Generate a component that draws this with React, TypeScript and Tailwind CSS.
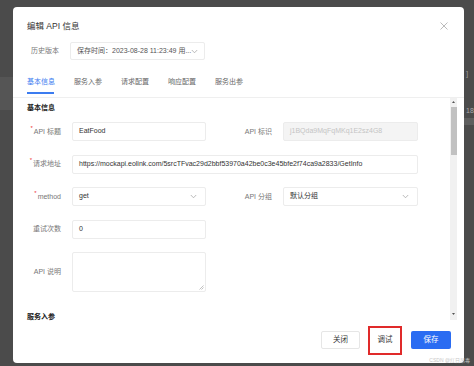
import React from "react";

const font = { fontFamily: '"Liberation Sans", "Noto Sans CJK SC", sans-serif' };

function Chevron() {
  return (
    <svg width="7" height="5" viewBox="0 0 7 5" className="shrink-0">
      <path d="M0.8 1 L3.5 3.8 L6.2 1" fill="none" stroke="#aaa" strokeWidth="0.8" />
    </svg>
  );
}

function Label({ text, required, width }: { text: string; required?: boolean; width: string }) {
  return (
    <div className={`${width} shrink-0 text-right text-[7px] leading-[10px] text-[#777] whitespace-nowrap`}>
      {required && <span className="relative -top-[4px] mr-[1px] text-[6px] text-[#e33]">*</span>}
      {text}
    </div>
  );
}

function Input({ value, width, disabled }: { value: string; width: string; disabled?: boolean }) {
  return (
    <div
      className={`${width} h-[19px] shrink-0 flex items-center px-[6px] border border-[#ececec] rounded-[2px] text-[7px] whitespace-nowrap overflow-hidden ${
        disabled ? "bg-[#f4f4f4] text-[#c4c4c4]" : "bg-white text-[#333]"
      }`}
    >
      {value}
    </div>
  );
}

function Select({ value, width }: { value: string; width: string }) {
  return (
    <div className={`${width} h-[19px] shrink-0 flex items-center justify-between pl-[6px] pr-[8px] border border-[#ececec] rounded-[2px] bg-white text-[7px] text-[#333]`}>
      <span>{value}</span>
      <Chevron />
    </div>
  );
}

export default function App() {
  const tabs = ["基本信息", "服务入参", "请求配置", "响应配置", "服务出参"];
  return (
    <div className="relative w-[474px] h-[366px] overflow-hidden bg-[#4b4b4b]" style={font}>
      {/* backdrop page hints */}
      <div className="absolute left-0 top-[77px] w-[14px] h-[33px] bg-[#555]" />
      <div className="absolute left-[466px] top-[68px] text-[8px] text-[#9a9a9a]">]</div>
      <div className="absolute left-[466px] top-[106px] text-[7px] text-[#aaa]">18</div>
      <div className="absolute left-[464px] top-[118px] w-[10px] h-[7px] bg-[#5e5e5e]" />

      {/* modal */}
      <div className="absolute left-[13px] top-[7px] w-[451px] h-[356px] bg-white rounded-[4px] flex flex-col">
        <div className="h-[33px] shrink-0 flex items-start justify-between pl-[14px] pr-[14px] pt-[14px]">
          <div className="text-[8.5px] leading-[10px] text-[#333]">编辑 API 信息</div>
          <svg width="8" height="8" viewBox="0 0 8 8" className="mt-[1px] mr-[2px]">
            <path d="M0.5 0.5 L7.5 7.5 M7.5 0.5 L0.5 7.5" stroke="#aaa" strokeWidth="0.8" />
          </svg>
        </div>

        <div className="mt-[2px] flex items-center pl-[18px] gap-[11px]">
          <div className="text-[7px] text-[#777] w-[28px] whitespace-nowrap">历史版本</div>
          <div className="w-[135px] h-[18px] flex items-center justify-between pl-[6px] pr-[7px] border border-[#ececec] rounded-[2px] text-[7px] text-[#555] whitespace-nowrap">
            <span>保存时间：2023-08-28 11:23:49 用...</span>
            <Chevron />
          </div>
        </div>

        <div className="mt-[14px] h-[24px] shrink-0 flex gap-[20px] pl-[14px] border-b border-[#efefef]">
          {tabs.map((t, i) => (
            <div key={t} className="relative w-[27px] pt-[3px]">
              <div className={`text-[7px] leading-[10px] whitespace-nowrap ${i === 0 ? "text-[#3c7cf0]" : "text-[#666]"}`}>{t}</div>
              {i === 0 && <div className="absolute left-0 right-0 top-[18px] h-[1.5px] bg-[#3c7cf0]" />}
            </div>
          ))}
        </div>

        <div className="relative flex-1 overflow-hidden mr-[7px]">
          <div className="pl-[14px] pt-[5px]">
            <div className="text-[7px] leading-[10px] font-bold text-[#222]">基本信息</div>
            <div className="mt-[9px] flex flex-col gap-[13.5px]">
              <div className="flex items-center">
                <Label text="API 标题" required width="w-[34px]" />
                <div className="w-[11px]" />
                <Input value="EatFood" width="w-[134px]" />
                <Label text="API 标识" width="w-[66px]" />
                <div className="w-[11px]" />
                <Input value="j1BQda9MqFqMKq1E2sz4G8" width="w-[135px]" disabled />
              </div>
              <div className="flex items-center">
                <Label text="请求地址" required width="w-[34px]" />
                <div className="w-[11px]" />
                <Input value="https://mockapi.eolink.com/5srcTFvac29d2bbf53970a42be0c3e45bfe2f74ca9a2833/GetInfo" width="w-[346px]" />
              </div>
              <div className="flex items-center">
                <Label text="method" required width="w-[34px]" />
                <div className="w-[11px]" />
                <Select value="get" width="w-[134px]" />
                <Label text="API 分组" width="w-[66px]" />
                <div className="w-[11px]" />
                <Select value="默认分组" width="w-[135px]" />
              </div>
              <div className="flex items-center">
                <Label text="重试次数" width="w-[34px]" />
                <div className="w-[11px]" />
                <Input value="0" width="w-[134px]" />
              </div>
              <div className="flex items-center">
                <Label text="API 说明" width="w-[34px]" />
                <div className="w-[11px]" />
                <div className="relative w-[134px] h-[40px] border border-[#ececec] rounded-[2px]">
                  <svg width="5" height="5" viewBox="0 0 5 5" className="absolute right-[1px] bottom-[1px]">
                    <path d="M4.5 0.5 L0.5 4.5 M4.5 2.5 L2.5 4.5" stroke="#999" strokeWidth="0.6" />
                  </svg>
                </div>
              </div>
            </div>
            <div className="mt-[20px] text-[7px] leading-[9px] font-bold text-[#222]">服务入参</div>
          </div>

          {/* scrollbar */}
          <div className="absolute right-0 top-0 bottom-[3px] w-[7px] bg-[#f1f1f1] flex flex-col items-center">
            <svg width="5" height="4" viewBox="0 0 5 4" className="mt-[2px]">
              <path d="M2.5 1 L4 3 L1 3 Z" fill="#555" />
            </svg>
            <div className="mt-[3px] w-[6px] h-[48px] bg-[#c1c1c1]" />
            <div className="flex-1" />
            <svg width="5" height="4" viewBox="0 0 5 4" className="mb-[4px]">
              <path d="M1 1 L4 1 L2.5 3 Z" fill="#555" />
            </svg>
          </div>
        </div>

        <div className="h-[40px] shrink-0 flex items-center justify-end pr-[13px] pb-[6px]">
          <div className="w-[39px] h-[18px] flex items-center justify-center border border-[#e6e6e6] rounded-[2px] text-[7.5px] text-[#333]">关闭</div>
          <div className="ml-[8px] w-[34px] h-[29px] flex items-center justify-center border-2 border-[#e02a2a] text-[7.5px] text-[#333]">调试</div>
          <div className="ml-[9px] w-[40px] h-[18px] flex items-center justify-center rounded-[2px] bg-[#2a6cf2] text-[7.5px] text-white">保存</div>
        </div>
      </div>

      <div className="absolute right-[4px] top-[357px] text-[5px] text-[#c8c8c8] whitespace-nowrap">CSDN @红日吊毒</div>
    </div>
  );
}
